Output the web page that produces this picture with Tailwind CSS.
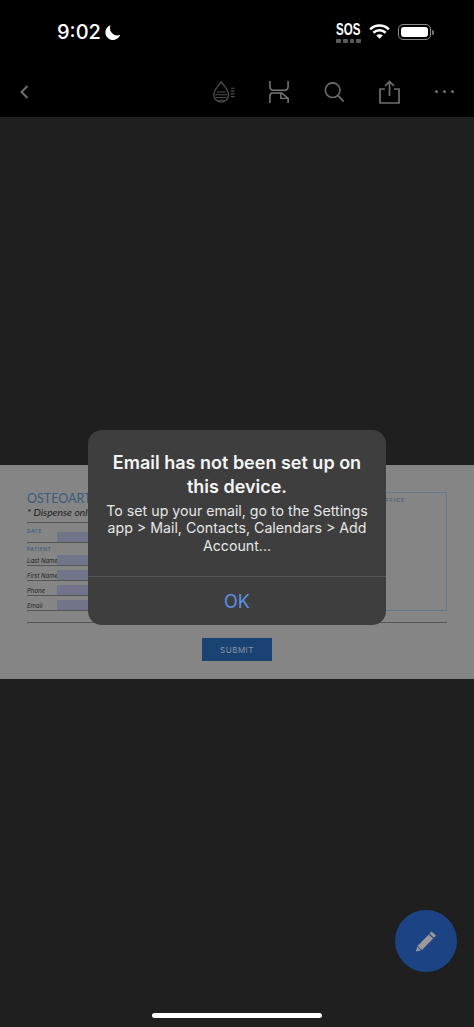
<!DOCTYPE html>
<html lang="en">
<head>
  <meta charset="UTF-8" />
  <meta name="viewport" content="width=device-width, initial-scale=1.0"/>
  <title>Email alert</title>
  <script src="https://cdn.jsdelivr.net/npm/@tailwindcss/browser@4"></script>
</head>
<body class="bg-[#1f1f1f] font-['Inter',sans-serif]">
  <div class="relative w-[474px] h-[1027px] overflow-hidden bg-[#1f1f1f]">

    <!-- status bar + toolbar -->
    <header class="h-[117px] bg-black">
      <div class="h-[70px] pt-[20px] pl-[57px] pr-[40px] flex justify-between items-start">
        <div class="flex items-center gap-[4px] text-white">
          <span class="text-[20px] leading-[24px] font-medium">9:02</span>
          <svg width="16" height="16" viewBox="0 0 16 16" fill="#fff"><path d="M5.600 1.200a7.300 7.300 0 0 0 9.600 9.600A7.600 7.600 0 1 1 5.600 1.200z"/></svg>
        </div>
        <div class="flex items-start">
          <div class="w-[26px] mr-[7px]">
            <div class="text-white text-[17px] leading-[15px] font-bold font-['Liberation_Sans',sans-serif] scale-x-[0.68] origin-left mt-[2px] whitespace-nowrap">SOS</div>
            <div class="flex gap-[2px] mt-[2px] w-[25px]">
              <span class="w-[5px] h-[4px] rounded-[1px] bg-[#5c5c5c]"></span>
              <span class="w-[5px] h-[4px] rounded-[1px] bg-[#5c5c5c]"></span>
              <span class="w-[5px] h-[4px] rounded-[1px] bg-[#5c5c5c]"></span>
              <span class="w-[5px] h-[4px] rounded-[1px] bg-[#5c5c5c]"></span>
            </div>
          </div>
          <svg class="mt-[3px] mr-[8px]" width="21" height="17" viewBox="0 0 22 17" fill="none" stroke="#fff" stroke-width="2.600"><path d="M1.200 6.200a14 14 0 0 1 19.600 0"/><path d="M4.600 9.800a9.200 9.200 0 0 1 12.800 0"/><path d="M11 16l-3.400-3.300a4.800 4.800 0 0 1 6.800 0z" fill="#fff" stroke="none"/></svg>
          <div class="flex items-center mt-[4px]">
            <div class="w-[33px] h-[16px] rounded-[5px] border border-[#8a8a8a] p-[2px]">
              <div class="w-full h-full rounded-[3px] bg-white"></div>
            </div>
            <span class="ml-[1px] w-[2px] h-[5px] rounded-r-sm bg-[#777]"></span>
          </div>
        </div>
      </div>
      <div class="h-[43px] flex items-center">
        <svg class="ml-[20px]" width="9" height="14" viewBox="0 0 9 14" fill="none" stroke="#6e6e6e" stroke-width="2"><path d="M7.500 1L1.500 7l6 6"/></svg>
        <div class="ml-auto flex items-center pr-[20px]">
          <svg width="25" height="24" viewBox="0 0 26 26" fill="none" stroke="#4e4e4e" stroke-width="1.400"><path d="M10.500 2C8 6 2.500 10.500 2.500 16a8 8 0 0 0 16 0C18.500 10.500 13 6 10.500 2z"/><path d="M6 13h9M4 16h13M5 19h11M7 22h7M21 9h4M21 12h4M21 15h4M21 18h4" stroke-width="1.200"/></svg>
          <svg class="ml-[33px]" width="20" height="24" viewBox="0 0 22 26" fill="none" stroke="#777" stroke-width="1.700"><path d="M1 1v6q0 4 4 4h12q4 0 4-4V1"/><path d="M1 25v-8q0-3 3-3h10l7 6v5"/><path d="M13 14v6h8" stroke-width="1.500"/></svg>
          <svg class="ml-[35px]" width="21" height="22" viewBox="0 0 23 24" fill="none" stroke="#6e6e6e" stroke-width="1.800"><circle cx="9.500" cy="10" r="8"/><path d="M15.500 16l6 6.500"/></svg>
          <svg class="ml-[34px]" width="21" height="24" viewBox="0 0 21 24" fill="none" stroke="#6e6e6e" stroke-width="1.700"><path d="M6 9H1v14h19V9h-5"/><path d="M10.500 16V2M6 6l4.500-4.500L15 6"/></svg>
          <div class="ml-[35px] flex gap-[5px]">
            <span class="w-[3px] h-[3px] rounded-full bg-[#6e6e6e]"></span>
            <span class="w-[3px] h-[3px] rounded-full bg-[#6e6e6e]"></span>
            <span class="w-[3px] h-[3px] rounded-full bg-[#6e6e6e]"></span>
          </div>
        </div>
      </div>
      <div class="h-[4px]"></div>
    </header>

    <!-- document page, dimmed -->
    <section class="mt-[348px] h-[214px] bg-[#858585] flex flex-col px-[27px] pt-[27px]">
      <div class="flex justify-between h-[130px]">
        <div class="w-[300px]">
          <div class="text-[12.500px] leading-[14px] text-[#3a5b7c] font-['Lato',sans-serif] whitespace-nowrap">OSTEOART</div>
          <div class="text-[10.300px] leading-[13px] italic text-[#1c1c1c] font-['Lato',sans-serif] whitespace-nowrap">* Dispense only</div>
          <div class="mt-[3px] border-t border-[#555] pt-[3px]">
            <div class="flex items-end h-[17px] w-[250px] border-b border-[#555]">
              <span class="w-[30px] self-start text-[5px] leading-[10px] tracking-[0.500px] font-semibold text-[#45607c]">DATE</span>
              <span class="flex-1 h-[10px] bg-[#72758a]"></span>
            </div>
            <div class="text-[5px] leading-[9px] mt-[2px] tracking-[0.500px] font-semibold text-[#45607c]">PATIENT</div>
            <div class="flex items-end h-[11px] w-[250px] mt-[1px] border-b border-[#555]">
              <span class="w-[30px] text-[6px] leading-[8px] italic text-[#222] whitespace-nowrap">Last Name</span>
              <span class="flex-1 h-[10px] bg-[#72758a]"></span>
            </div>
            <div class="flex items-end h-[11px] w-[250px] mt-[4px] border-b border-[#555]">
              <span class="w-[30px] text-[6px] leading-[8px] italic text-[#222] whitespace-nowrap">First Name</span>
              <span class="flex-1 h-[10px] bg-[#72758a]"></span>
            </div>
            <div class="flex items-end h-[11px] w-[250px] mt-[4px] border-b border-[#555]">
              <span class="w-[30px] text-[6px] leading-[8px] italic text-[#222] whitespace-nowrap">Phone</span>
              <span class="flex-1 h-[10px] bg-[#72758a]"></span>
            </div>
            <div class="flex items-end h-[11px] w-[250px] mt-[4px] border-b border-[#555]">
              <span class="w-[30px] text-[6px] leading-[8px] italic text-[#222] whitespace-nowrap">Email</span>
              <span class="flex-1 h-[10px] bg-[#72758a]"></span>
            </div>
          </div>
        </div>
        <div class="w-[120px] h-[119px] border border-[#66788a] text-right pr-[41px] text-[5px] leading-[14px] tracking-[1px] font-semibold text-[#45607c]">OFFICE</div>
      </div>
      <div class="border-t border-[#555]"></div>
      <div class="mt-[15px] mx-auto w-[70px] h-[23px] bg-[#1a4272] flex items-center justify-center text-[8px] tracking-[0.500px] text-[#8a97a6]">SUBMIT</div>
    </section>

    <!-- alert -->
    <div class="absolute left-[88px] top-[430px] w-[298px] h-[195px] rounded-[14px] bg-[#3e3e3e] flex flex-col text-center">
      <div class="h-[147px] border-b border-[#555] pt-[21px] px-[12px]">
        <div class="text-[18px] leading-[24px] font-semibold text-[#f5f5f5] px-[4px]">Email has not been set up on this device.</div>
        <div class="mt-[2.500px] text-[14.200px] leading-[17.500px] text-[#e6e6e6]">To set up your email, go to the Settings app &gt; Mail, Contacts, Calendars &gt; Add Account...</div>
      </div>
      <div class="flex-1 flex items-center justify-center text-[18px] text-[#5f8fe6]">OK</div>
    </div>

    <!-- edit button -->
    <div class="absolute left-[395px] top-[910px] w-[62px] h-[62px] rounded-full bg-[#1c4484] flex items-center justify-center">
      <svg width="24" height="24" viewBox="0 0 24 24" fill="#9a9a9a"><path d="M17.500 2.500l4.500 4-2 2.300-4.500-4z"/><path d="M14.700 5.500l4.500 4L8 21l-4.500-4z"/><path d="M3.200 17.800L2 22.500l5-1.200z"/></svg>
    </div>

    <div class="absolute left-[152px] top-[1013px] w-[170px] h-[5px] rounded-full bg-white"></div>
  </div>
</body>
</html>
